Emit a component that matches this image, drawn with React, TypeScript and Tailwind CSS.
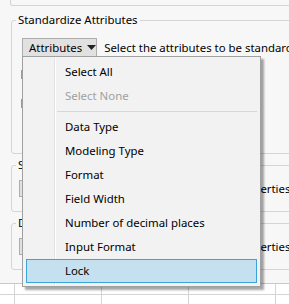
import React from "react";

const font = { fontFamily: '"Segoe UI", "Noto Sans", sans-serif' };

function Group({ label, top, children, h }: { label: string; top: string; children?: React.ReactNode; h: string }) {
  return (
    <div className={`relative ml-[11px] w-[300px] ${top} ${h} rounded-[3px] border border-[#d5d5d5]`}>
      <span className="absolute left-[4px] top-[-9px] bg-[#f7f7f7] px-[2px] leading-[16px] text-black">{label}</span>
      {children}
    </div>
  );
}

export default function App() {
  const items: { label: string; disabled?: boolean; sep?: boolean; active?: boolean }[] = [
    { label: "Select All" },
    { label: "Select None", disabled: true },
    { label: "", sep: true },
    { label: "Data Type" },
    { label: "Modeling Type" },
    { label: "Format" },
    { label: "Field Width" },
    { label: "Number of decimal places" },
    { label: "Input Format" },
    { label: "Lock", active: true },
  ];
  return (
    <div className="relative h-[304px] w-[289px] overflow-hidden bg-white text-[11.4px] text-black" style={font}>
      <div className="h-[284px] overflow-hidden border-b border-[#c8c8c8] bg-[#f7f7f7]">
        <div className="ml-[10px] h-[6px] rounded-bl-[3px] border-b border-l border-[#d5d5d5]" />
        <Group label="Standardize Attributes" top="mt-[14px]" h="h-[134px]">
          <div className="ml-[10px] mt-[17px] flex items-center">
            <div className="flex h-[19px] w-[77px] items-center border border-[#adadad] bg-[#e1e1e1] pl-[6px]">
              <span className="leading-[16px]">Attributes</span>
              <svg width="9" height="5" viewBox="0 0 9 5" className="ml-[5px]">
                <path d="M0 0 H9 L4.5 5 Z" fill="#222" />
              </svg>
            </div>
            <span className="ml-[7px] whitespace-nowrap leading-[16px]">Select the attributes to be standardized</span>
          </div>
          <div className="ml-[9px] mt-[13px] flex flex-col gap-[20px]">
            <div className="h-[9px] w-[8px] border-l-2 border-[#c98a7e]" />
            <div className="h-[9px] w-[8px] border-l-2 border-[#c98a7e]" />
          </div>
        </Group>
        <Group label="Standardize Properties" top="mt-[11px]" h="h-[47px]">
          <div className="ml-[7px] mt-[14px] flex items-center">
            <div className="flex h-[17px] w-[70px] items-center border border-[#adadad] bg-[#e1e1e1] pl-[3px] text-[#b5651d]">c</div>
            <span className="ml-[146px] whitespace-nowrap">properties</span>
          </div>
        </Group>
        <Group label="Delete Properties" top="mt-[11px]" h="h-[47px]">
          <div className="ml-[7px] mt-[14px] flex items-center">
            <div className="flex h-[17px] w-[70px] items-center border border-[#adadad] bg-[#e1e1e1] pl-[3px] text-[#b5651d]">c</div>
            <span className="ml-[146px] whitespace-nowrap">properties</span>
          </div>
        </Group>
      </div>
      <div className="grid grid-cols-[15px_87px_87px_87px_13px]">
        <div className="h-[11px] border-b border-r border-[#d4d4d4]" />
        <div className="h-[11px] border-b border-r border-[#d4d4d4]" />
        <div className="h-[11px] border-b border-r border-[#d4d4d4]" />
        <div className="h-[11px] border-b border-r border-[#d4d4d4]" />
        <div className="h-[11px] border-b border-[#d4d4d4]" />
        <div className="h-[10px] border-r border-[#d4d4d4]" />
        <div className="h-[10px] border-r border-[#d4d4d4]" />
        <div className="h-[10px] border-r border-[#d4d4d4]" />
        <div className="h-[10px] border-r border-[#d4d4d4]" />
        <div className="h-[10px]" />
      </div>

      <div className="absolute left-[22px] top-[56px] w-[239px] border border-[#a0a0a0] bg-[#f2f2f2] py-[3px] shadow-[3px_3px_2px_rgba(0,0,0,0.35)]">
        <div className="absolute bottom-0 left-[31px] top-0 w-px bg-[#e2e2e2]" />
        <div className="absolute bottom-0 left-[32px] top-0 w-px bg-white" />
        {items.map((it, i) =>
          it.sep ? (
            <div key={i} className="relative flex h-[7px] items-center pl-[34px] pr-[3px]">
              <div className="h-px w-full bg-[#d7d7d7]" />
            </div>
          ) : (
            <div
              key={i}
              className={`relative mx-[3px] flex h-[24px] items-center border pl-[38px] ${
                it.active ? "border-[#3aa3da] bg-[#c5e0ee]" : "border-transparent"
              } ${it.disabled ? "text-[#a0a0a0]" : "text-black"}`}
            >
              {it.label}
            </div>
          )
        )}
      </div>
    </div>
  );
}
